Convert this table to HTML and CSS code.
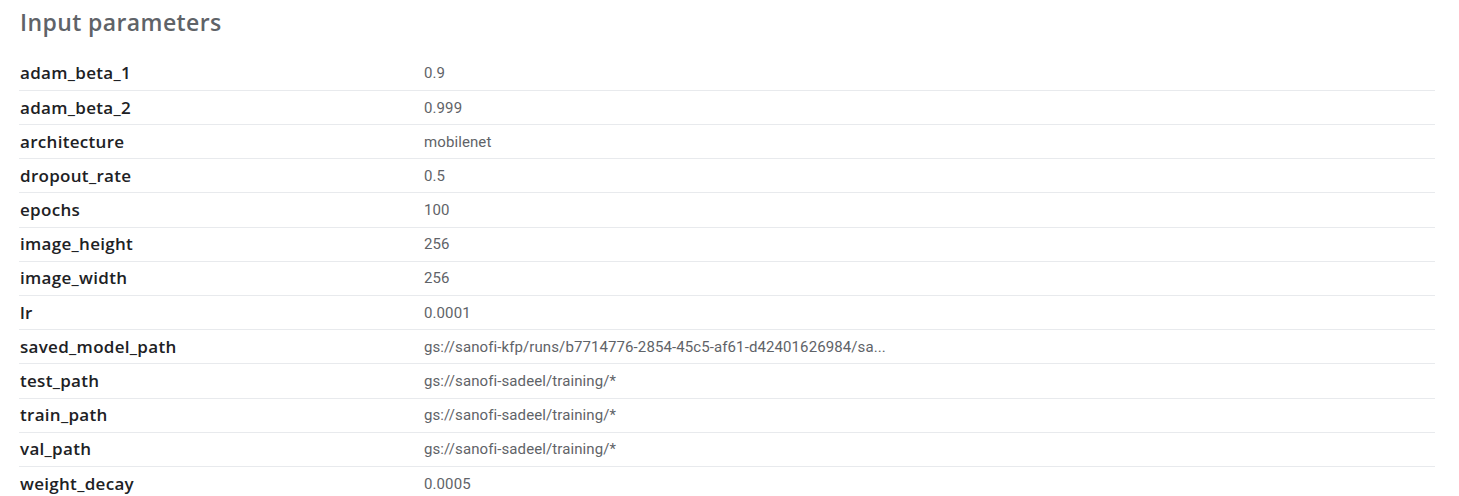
FILE: index.html
```html
<!DOCTYPE html>
<html>
<head>
<meta charset="utf-8">
<link rel="stylesheet" href="styles.css">
</head>
<body>
<div class="page">
  <h2 class="title">Input parameters</h2>
  <div class="table">
    <div class="row"><div class="key">adam_beta_1</div><div class="val">0.9</div></div>
    <div class="row"><div class="key">adam_beta_2</div><div class="val">0.999</div></div>
    <div class="row"><div class="key">architecture</div><div class="val">mobilenet</div></div>
    <div class="row"><div class="key">dropout_rate</div><div class="val">0.5</div></div>
    <div class="row"><div class="key">epochs</div><div class="val">100</div></div>
    <div class="row"><div class="key">image_height</div><div class="val">256</div></div>
    <div class="row"><div class="key">image_width</div><div class="val">256</div></div>
    <div class="row"><div class="key">lr</div><div class="val">0.0001</div></div>
    <div class="row"><div class="key">saved_model_path</div><div class="val">gs://sanofi-kfp/runs/b7714776-2854-45c5-af61-d42401626984/sa...</div></div>
    <div class="row"><div class="key">test_path</div><div class="val">gs://sanofi-sadeel/training/*</div></div>
    <div class="row"><div class="key">train_path</div><div class="val">gs://sanofi-sadeel/training/*</div></div>
    <div class="row"><div class="key">val_path</div><div class="val">gs://sanofi-sadeel/training/*</div></div>
    <div class="row"><div class="key">weight_decay</div><div class="val">0.0005</div></div>
  </div>
</div>
</body>
</html>
```
FILE: styles.css
```css
html, body {
  margin: 0;
  padding: 0;
  background: #ffffff;
}
.page {
  padding: 8px 24px 0 19px;
  font-family: Roboto, "Noto Sans", sans-serif;
}
.title {
  margin: 0 0 0 1px;
  height: 48.8px;
  font-family: "Open Sans", Roboto, sans-serif;
  font-size: 23px;
  letter-spacing: 0.4px;
  line-height: 28px;
  font-weight: 600;
  color: #5f6368;
}
.table {
  display: flex;
  flex-direction: column;
}
.row {
  display: grid;
  grid-template-columns: 405px 1fr;
  align-items: center;
  height: 34.18px;
  box-sizing: border-box;
  border-bottom: 1px solid #e8eaed;
}
.row:last-child {
  border-bottom: none;
}
.key {
  padding-left: 1px;
  font-family: "Open Sans", Roboto, sans-serif;
  font-size: 17px;
  letter-spacing: 0.3px;
  line-height: 20px;
  font-weight: 600;
  color: #202124;
}
.val {
  font-size: 15px;
  letter-spacing: 0.1px;
  color: #5f6368;
}
```
